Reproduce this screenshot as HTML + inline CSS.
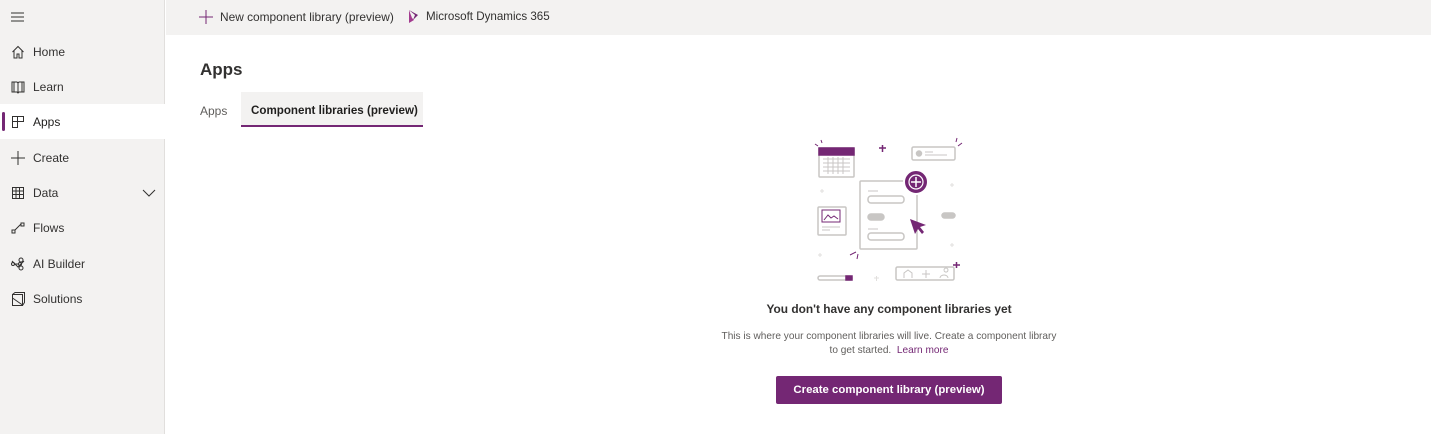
<!DOCTYPE html>
<html><head><style>
*{margin:0;padding:0;box-sizing:border-box}
body{width:1431px;height:434px;overflow:hidden;font-family:"Liberation Sans",sans-serif;background:#fff;position:relative;color:#323130}
.side{position:absolute;left:0;top:0;width:165px;height:434px;background:#f3f2f1;border-right:1px solid #e1dfdd}
.item{position:absolute;left:0;width:165px;height:35px;font-size:12px;display:flex;align-items:center}
.item svg{position:absolute;left:11px}
.item span{position:absolute;left:33px}
.top{position:absolute;left:166px;top:0;right:0;height:35px;background:#f3f2f1;font-size:12px;white-space:nowrap}
.chev{position:absolute;left:142px}
</style></head><body>
<div class="side">
<svg style="position:absolute;left:11px;top:11px" width="14" height="12" viewBox="0 0 14 12"><path d="M0 2h13M0 6h13M0 10h13" stroke="#323130" stroke-width="1"/></svg>
<div class="item" style="top:34px"><svg width="14" height="14" viewBox="0 0 14 14" fill="none" stroke="#323130"><path d="M1.5 7L7 1.5 12.5 7M3 5.5V13h3V9h2v4h3V5.5"/></svg><span>Home</span></div>
<div class="item" style="top:69px"><svg width="14" height="14" viewBox="0 0 14 14" fill="none" stroke="#323130"><path d="M1 2h5l1 1 1-1h5v10H8l-1 1-1-1H1zM7 3v10M3 2v10M11 2v10"/></svg><span>Learn</span></div>
<div class="item" style="top:104px;background:#fff"><div style="position:absolute;left:2px;top:8px;width:3px;height:19px;background:#742774;border-radius:2px"></div><svg width="14" height="14" viewBox="0 0 14 14" fill="none" stroke="#323130"><path d="M1.5 1.5h11v5h-6v6h-5zM6.5 1.5v5M1.5 6.5h5"/></svg><span style="color:#201f1e">Apps</span></div>
<div class="item" style="top:140px"><svg width="14" height="14" viewBox="0 0 14 14" stroke="#323130"><path d="M7 0v14M0 7h14"/></svg><span>Create</span></div>
<div class="item" style="top:175px"><svg width="14" height="14" viewBox="0 0 14 14" fill="none" stroke="#323130"><path d="M1.5 1.5h11v11h-11zM1.5 5h11M1.5 8.5h11M5 1.5v11M8.5 1.5v11"/></svg><span>Data</span><svg class="chev" style="left:142px" width="14" height="8" viewBox="0 0 14 8" fill="none" stroke="#323130"><path d="M1 1l6 6 6-6"/></svg></div>
<div class="item" style="top:210px"><svg width="14" height="14" viewBox="0 0 14 14" fill="none" stroke="#323130"><path d="M1 9h3v3H1zM10 2h3v3h-3zM4 9l6-6"/></svg><span>Flows</span></div>
<div class="item" style="top:246px"><svg width="14" height="14" viewBox="0 0 14 14" fill="none" stroke="#323130"><circle cx="2" cy="7" r="1.5"/><circle cx="10" cy="3" r="2"/><circle cx="10" cy="11" r="2"/><circle cx="9" cy="7" r="1.5"/><path d="M3.5 7h4"/></svg><span>AI Builder</span><svg class="chev" width="14" height="8" viewBox="0 0 14 8" fill="none" stroke="#323130"><path d="M1 1l6 6 6-6"/></svg></div>
<div class="item" style="top:281px"><svg width="14" height="14" viewBox="0 0 14 14" fill="none" stroke="#323130"><path d="M1.5 2.5h10v11h-10zM1.5 2.5L4 .5h9.5v10l-2 3M1.5 6l10 7"/></svg><span>Solutions</span></div>
</div>
<div class="top">
<svg style="position:absolute;left:33px;top:10px" width="14" height="14" viewBox="0 0 14 14" stroke="#742774"><path d="M7 0v14M0 7h14"/></svg>
<span style="position:absolute;left:54px;top:10px;font-size:11.9px">New component library (preview)</span>
<svg style="position:absolute;left:243px;top:10px" width="10" height="14" viewBox="0 0 10 14"><path d="M0 0l9 5-5 5 2-5z" fill="#742774"/><path d="M0 0v13l5-3-2-2z" fill="#a33b8f"/></svg>
<span style="position:absolute;left:260px;top:10px;font-size:11.6px">Microsoft Dynamics 365</span>
</div>
<div style="position:absolute;left:200px;top:60px;font-size:17px;font-weight:bold;color:#323130">Apps</div>
<div style="position:absolute;left:200px;top:104px;font-size:12px;color:#605e5c">Apps</div>
<div style="position:absolute;left:241px;top:92px;width:182px;height:35px;background:#f3f2f1;border-bottom:2px solid #742774;font-size:11.6px;font-weight:bold;color:#201f1e;padding:12px 0 0 10px;white-space:nowrap">Component libraries (preview)</div>

<svg style="position:absolute;left:800px;top:135px" width="180" height="150" viewBox="800 135 180 150" fill="none" stroke="#c8c6c4" stroke-width="1.5">
<rect x="819" y="148" width="35" height="29" rx="1" fill="#fff"/><rect x="819" y="148" width="35" height="7" fill="#742774" stroke="#742774"/>
<path d="M823 159h27M823 163h27M823 167h27M823 171h27M828 157v17M833 157v17M838 157v17M843 157v17" stroke-width="1"/>
<rect x="912" y="147" width="43" height="13" rx="1.5"/><circle cx="919" cy="153.5" r="2.5" fill="#c8c6c4"/><path d="M925 152h8M925 155h22" stroke-width="1"/>
<rect x="860" y="181" width="57" height="68" rx="1"/>
<path d="M868 191h10" stroke-width="1"/><rect x="868" y="196" width="36" height="7" rx="3"/>
<rect x="868" y="214" width="16" height="6" rx="3" fill="#c8c6c4"/>
<path d="M868 229h10" stroke-width="1"/><rect x="868" y="233" width="36" height="7" rx="3"/>
<circle cx="916" cy="182" r="12" fill="#742774" stroke="#fff" stroke-width="2"/><path d="M916 177v10M911 182h10" stroke="#fff" stroke-width="1.5"/><circle cx="916" cy="182" r="7" stroke="#fff" stroke-width="1.2"/>
<path d="M910 219l16 6-6 2 4 5-2 2-4-5-3 5z" fill="#742774" stroke="none"/>
<rect x="818" y="207" width="28" height="28" rx="1"/><rect x="822" y="210" width="18" height="12" stroke="#742774" stroke-width="1"/><path d="M824 220l4-5 3 3 3-2 4 3" stroke="#742774" stroke-width="1"/><path d="M822 227h18M822 230h8" stroke-width="1"/>
<rect x="942" y="213" width="13" height="5" rx="2.5" fill="#c8c6c4"/>
<rect x="896" y="267" width="58" height="13" rx="1.5"/><path d="M904 278v-5l4-3 4 3v5M926 270v8M922 274h8M944 270a2 2 0 1 1 0 .1M940 278a4 3 0 0 1 8 0" stroke-width="1"/>
<rect x="818" y="276" width="34" height="4" rx="2"/><rect x="846" y="276" width="6" height="4" fill="#742774" stroke="#742774"/>
<path d="M879 148h7M882.5 145v7M953 265h7M956.5 262v6" stroke="#742774" stroke-width="1.5"/>
<path d="M850 255l6-3M858 254l-1 5M815 144l3 2M821 140l1 3M958 146l4-3M956 142l1-4" stroke="#742774" stroke-width="1"/>
<path d="M820 191h4M822 189v4M950 185h4M952 183v4M950 245h4M952 243v4M818 255h4M820 253v4M874 278h5M876.5 276v5" stroke="#e1dfdd" stroke-width="1"/>
</svg>
<div style="position:absolute;left:689px;width:400px;top:302px;text-align:center;font-size:11.9px;font-weight:bold;color:#323130">You don't have any component libraries yet</div>
<div style="position:absolute;left:689px;width:400px;top:330px;text-align:center;font-size:10.1px;line-height:14px;color:#605e5c">This is where your component libraries will live. Create a component library<br>to get started.&nbsp; <span style="color:#742774">Learn more</span></div>
<div style="position:absolute;left:776px;top:376px;width:226px;height:28px;background:#742774;border-radius:2px;color:#fff;font-size:11.4px;font-weight:bold;text-align:center;line-height:28px;white-space:nowrap">Create component library (preview)</div>
</body></html>
